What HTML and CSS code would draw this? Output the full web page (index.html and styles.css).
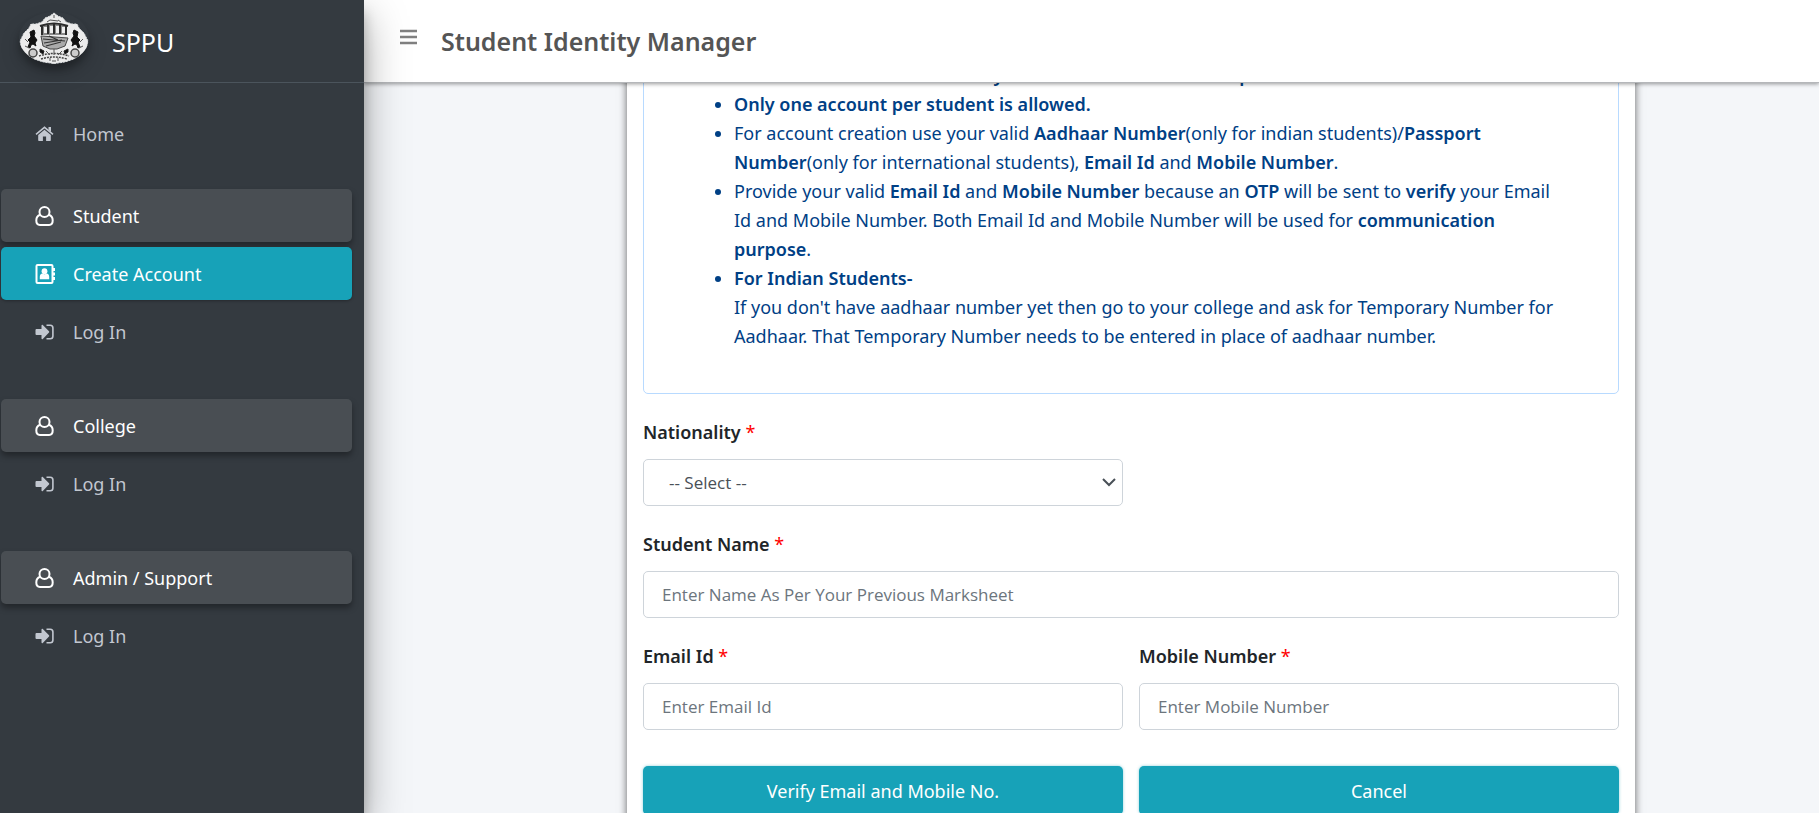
FILE: index.html
```html
<!DOCTYPE html>
<html lang="en">
<head>
    <meta charset="UTF-8">
    <meta name="viewport" content="width=device-width, initial-scale=1.0">
    <title>Student Identity Manager</title>
    <link rel="stylesheet" href="styles.css">
</head>
<body>

    <!-- shared icons -->
    <svg class="sprite" aria-hidden="true">
        <symbol id="icon-user" viewBox="0 0 20 20">
            <circle cx="9.500" cy="6" r="5" fill="none" stroke="currentColor" stroke-width="2"/>
            <path d="M5.100 8.800C2.500 9.600 1.300 12 1.300 14.600c0 2.800 1.400 4.400 3.600 4.400h9.200c2.200 0 3.600-1.600 3.600-4.400 0-2.600-1.200-5-3.800-5.800" fill="none" stroke="currentColor" stroke-width="2"/>
        </symbol>
        <symbol id="icon-login" viewBox="0 0 20 20">
            <path d="M1.400 7H6.500V3.400c0-.7.8-1 1.300-.5l6.200 6.400c.4.4.4.9 0 1.300l-6.200 6.400c-.5.5-1.300.2-1.300-.5V13H1.400c-.5 0-.9-.4-.9-.9V7.900c0-.5.4-.9.900-.9z" fill="currentColor"/>
            <path d="M11.500 3.200h3.700c1.700 0 2.700 1.100 2.700 2.700v8.200c0 1.600-1 2.700-2.700 2.700h-3.700" fill="none" stroke="currentColor" stroke-width="1.600"/>
        </symbol>
        <symbol id="icon-home" viewBox="0 0 20 20">
            <path d="M9.500 5.800l6.300 5.300v5.200c0 .4-.3.700-.7.700h-4v-4.500H7.900V17h-4c-.4 0-.7-.3-.7-.7v-5.200z" fill="currentColor"/>
            <path d="M1 10.400L9.500 3.300l8.500 7.100" fill="none" stroke="currentColor" stroke-width="1.500"/>
            <path d="M13.500 3H16v5l-2.500-2z" fill="currentColor"/>
        </symbol>
        <symbol id="icon-book" viewBox="0 0 20 20">
            <rect x="1.500" y="1" width="16" height="18" rx="1" fill="none" stroke="currentColor" stroke-width="2"/>
            <path d="M18 4h2v3h-2zM18 8.500h2v3h-2zM18 13h2v3h-2z" fill="currentColor"/>
            <circle cx="9.500" cy="7.200" r="2.900" fill="currentColor"/>
            <path d="M4.800 15.200v-2.400c0-1.800 1-3.300 2.500-3.300 1.300 1.100 3.100 1.100 4.400 0 1.500 0 2.500 1.500 2.500 3.300v2.400z" fill="currentColor"/>
        </symbol>
    </svg>

    <div class="wrapper">

        <aside class="sidebar">
            <a href="#" class="brand">
                <svg class="brand-logo" viewBox="0 0 70 52" role="img" aria-label="University crest">
                    <path d="M35 1l4 3 5 2 3 4 6 2 5 0 2 4 5 5 4 8-1 7-5 6-8 5-9 3-7 1-4 1-4-1-7-1-9-3-8-5-5-6-1-7 4-8 5-5 2-4 5 0 6-2 3-4 5-2z" fill="#ececec" stroke="#d9dbdc" stroke-dasharray="2 1"/>
                    <path d="M22 13h26v10H22z" fill="#8a8a8a"/>
                    <path d="M21 14q14-5 28 0M23 13v10M29 13v9M35 12v10M41 13v9M47 13v10" fill="none" stroke="#2b2b2b" stroke-width="2"/>
                    <path d="M25 15h3v6h-3zM31 14h3v7h-3zM37 14h3v7h-3zM43 15h3v6h-3z" fill="#efefef"/>
                    <path d="M22 24l27 2-3 8-8 3h-7l-7-3z" fill="#aaa" stroke="#444"/>
                    <path d="M24 27l22 2M25 31l18-3M27 34l15-4M30 24l9 4" stroke="#333" stroke-width="1.200"/>
                    <path d="M11 20l4-2 1 3-1 3 3 4-2 3 1 3-3-2-2 1-1 3-2-1 2-5-2-2 3-3z" fill="#111" stroke="#111"/>
                    <path d="M59 20l-4-2-1 3 1 3-3 4 2 3-1 3 3-2 2 1 1 3 2-1-2-5 2-2-3-3z" fill="#111" stroke="#111"/>
                    <circle cx="14" cy="41" r="4" fill="#ccc" stroke="#444" stroke-width="1.500"/>
                    <circle cx="56" cy="41" r="4" fill="#ccc" stroke="#444" stroke-width="1.500"/>
                    <path d="M21 37l4 2-1 3-3-2zM49 37l-4 2 1 3 3-2z" fill="#111" stroke="#222"/>
                    <path d="M20 44q15-5 30 0M22 47q13-4 26 0" fill="none" stroke="#444" stroke-width="1.500" stroke-dasharray="2 1"/>
                    <path d="M27 39l4 4M43 39l-4 4M35 37v6M31 46v3M39 46v3M35 3v3M31 8l8 1M28 10l3-2M42 10l-3-2M6 27l3 3M64 27l-3 3M6 34l4 2M64 34l-4 2M33 49h4" fill="none" stroke="#555"/>
                </svg>
                <span class="brand-text">SPPU</span>
            </a>

            <nav class="nav">
                <ul class="nav-group nav-home">
                    <li><a href="#" class="nav-link"><svg class="icon"><use href="#icon-home"/></svg>Home</a></li>
                </ul>
                <ul class="nav-group">
                    <li><a href="#" class="nav-link nav-title"><svg class="icon"><use href="#icon-user"/></svg>Student</a></li>
                    <li><a href="#" class="nav-link active"><svg class="icon"><use href="#icon-book"/></svg>Create Account</a></li>
                    <li><a href="#" class="nav-link"><svg class="icon"><use href="#icon-login"/></svg>Log In</a></li>
                </ul>
                <ul class="nav-group">
                    <li><a href="#" class="nav-link nav-title"><svg class="icon"><use href="#icon-user"/></svg>College</a></li>
                    <li><a href="#" class="nav-link"><svg class="icon"><use href="#icon-login"/></svg>Log In</a></li>
                </ul>
                <ul class="nav-group">
                    <li><a href="#" class="nav-link nav-title"><svg class="icon"><use href="#icon-user"/></svg>Admin / Support</a></li>
                    <li><a href="#" class="nav-link"><svg class="icon"><use href="#icon-login"/></svg>Log In</a></li>
                </ul>
            </nav>
        </aside>

        <div class="page">
            <header class="topbar">
                <button type="button" class="menu-btn" aria-label="Toggle menu">
                    <svg viewBox="0 0 18 16" width="18" height="16"><path d="M1 2h17M1 8h17M1 14h17" stroke="currentColor" stroke-width="2.500"/></svg>
                </button>
                <h1 class="topbar-title">Student Identity Manager</h1>
            </header>

            <main class="content">
                <form class="card">
                    <div class="alert">
                        <ul>
                            <li><b>Account creation is mandatory for all the students of this portal.</b></li>
                            <li><b>Only one account per student is allowed.</b></li>
                            <li>For account creation use your valid <b>Aadhaar Number</b>(only for indian students)/<b>Passport Number</b>(only for international students), <b>Email Id</b> and <b>Mobile Number</b>.</li>
                            <li>Provide your valid <b>Email Id</b> and <b>Mobile Number</b> because an <b>OTP</b> will be sent to <b>verify</b> your Email Id and Mobile Number. Both Email Id and Mobile Number will be used for <b>communication purpose</b>.</li>
                            <li><b>For Indian Students-</b><br>If you don't have aadhaar number yet then go to your college and ask for Temporary Number for Aadhaar. That Temporary Number needs to be entered in place of aadhaar number.</li>
                        </ul>
                    </div>

                    <div class="row">
                        <div class="field">
                            <label for="nationality">Nationality <span class="required">*</span></label>
                            <div class="select-box">
                                <select id="nationality" class="control">
                                    <option>-- Select --</option>
                                    <option>Indian</option>
                                    <option>International</option>
                                </select>
                                <svg class="chevron" viewBox="0 0 14 10"><path d="M1 2l6 6 6-6" fill="none" stroke="currentColor" stroke-width="2"/></svg>
                            </div>
                        </div>
                        <div class="field"></div>
                    </div>

                    <div class="row">
                        <div class="field">
                            <label for="name">Student Name <span class="required">*</span></label>
                            <input type="text" id="name" class="control" placeholder="Enter Name As Per Your Previous Marksheet">
                        </div>
                    </div>

                    <div class="row">
                        <div class="field">
                            <label for="email">Email Id <span class="required">*</span></label>
                            <input type="email" id="email" class="control" placeholder="Enter Email Id">
                        </div>
                        <div class="field">
                            <label for="mobile">Mobile Number <span class="required">*</span></label>
                            <input type="tel" id="mobile" class="control" placeholder="Enter Mobile Number">
                        </div>
                    </div>

                    <div class="row actions">
                        <button type="button" class="btn">Verify Email and Mobile No.</button>
                        <button type="button" class="btn">Cancel</button>
                    </div>
                </form>
            </main>
        </div>

    </div>

</body>
</html>
```

FILE: styles.css
```css
* {
    margin: 0;
    padding: 0;
    box-sizing: border-box;
}
body {
    font-family: 'Noto Sans', 'Open Sans', sans-serif;
    font-size: 18px;
    color: #212529;
    background-color: #f4f6f9;
}
ul {
    list-style: none;
}
a {
    color: inherit;
    text-decoration: none;
}
.sprite {
    display: none;
}
.wrapper {
    display: flex;
    height: 100vh;
    overflow: hidden;
}

/* sidebar */
.sidebar {
    position: relative;
    z-index: 2;
    flex: 0 0 364px;
    background-color: #343a40;
    color: #c2c7d0;
    box-shadow: 0 16px 40px rgba(0, 0, 0, 0.35), 0 12px 12px rgba(0, 0, 0, 0.22);
}
.brand {
    display: flex;
    align-items: center;
    gap: 23px;
    height: 83px;
    padding: 0 19px 6px;
    border-bottom: 1px solid #4b545c;
    color: #fff;
}
.brand-logo {
    width: 70px;
    height: 52px;
    border-radius: 50%;
    box-shadow: 0 10px 20px rgba(0, 0, 0, 0.19), 0 6px 6px rgba(0, 0, 0, 0.23);
}
.brand-text {
    font-size: 25px;
    padding-top: 8px;
}
.nav {
    padding: 24px 12px 0 1px;
}
.nav-group {
    display: flex;
    flex-direction: column;
    gap: 5px;
    margin-bottom: 41px;
}
.nav-home {
    margin-bottom: 29px;
}
.nav-link {
    display: flex;
    align-items: center;
    gap: 18px;
    height: 53px;
    padding-left: 34px;
    border-radius: 5px;
}
.nav-title {
    background-color: #494e53;
    color: #fff;
    box-shadow: 0 4px 6px rgba(0, 0, 0, 0.35);
}
.active {
    position: relative;
    background-color: #17a2b8;
    color: #fff;
    box-shadow: 0 1px 3px rgba(0, 0, 0, 0.3);
}
.icon {
    width: 20px;
    height: 20px;
}

/* top bar */
.page {
    flex: 1;
    min-width: 0;
    display: flex;
    flex-direction: column;
}
.topbar {
    position: relative;
    z-index: 1;
    flex: 0 0 83px;
    display: flex;
    align-items: center;
    gap: 24px;
    padding-left: 35px;
    background-color: #fff;
    border-bottom: 1px solid #b5b7ba;
    box-shadow: 0 1px 4px rgba(0, 0, 0, 0.4);
}
.menu-btn {
    border: none;
    background: none;
    color: #808080;
    cursor: pointer;
    padding-bottom: 8px;
}
.menu-btn svg {
    display: block;
}
.topbar-title {
    font-size: 25px;
    font-weight: 600;
    color: #555;
}

/* form */
.content {
    display: grid;
    grid-template-columns: 263fr 1008fr 184fr;
}
.card {
    grid-column: 2;
    margin-top: -40px;
    padding: 0 16px 16px;
    background-color: #fff;
    box-shadow: 0 0 8px rgba(0, 0, 0, 0.6);
}
.alert {
    padding: 17px 60px 42px 90px;
    border: 1px solid #b8daff;
    border-radius: 5px;
    color: #004085;
    line-height: 29px;
}
.alert ul {
    list-style: disc;
}
b {
    font-weight: 600;
}
.row {
    display: flex;
    gap: 16px;
    margin-top: 25px;
}
.field {
    flex: 1;
}
.field label {
    display: block;
    margin-bottom: 13px;
    line-height: 27px;
    font-weight: 600;
}
.required {
    color: #f00;
    font-weight: 400;
}
.control {
    display: block;
    width: 100%;
    height: 47px;
    padding: 0 18px;
    border: 1px solid #ced4da;
    border-radius: 5px;
    background-color: #fff;
    color: #495057;
    font-family: 'Open Sans', 'Noto Sans', sans-serif;
    font-size: 17px;
}
.control::placeholder {
    color: #6c757d;
}
.select-box {
    position: relative;
}
.select-box .control {
    appearance: none;
    padding: 0 25px;
}
.chevron {
    position: absolute;
    right: 7px;
    top: 18px;
    width: 14px;
    height: 10px;
    color: #495057;
    pointer-events: none;
}
.actions {
    margin-top: 36px;
}
.btn {
    flex: 1;
    height: 49px;
    border: none;
    border-radius: 5px;
    background-color: #17a2b8;
    color: #fff;
    font-family: inherit;
    font-size: 18px;
    cursor: pointer;
    box-shadow: 0 0 3px rgba(23, 162, 184, 0.5);
}
```
